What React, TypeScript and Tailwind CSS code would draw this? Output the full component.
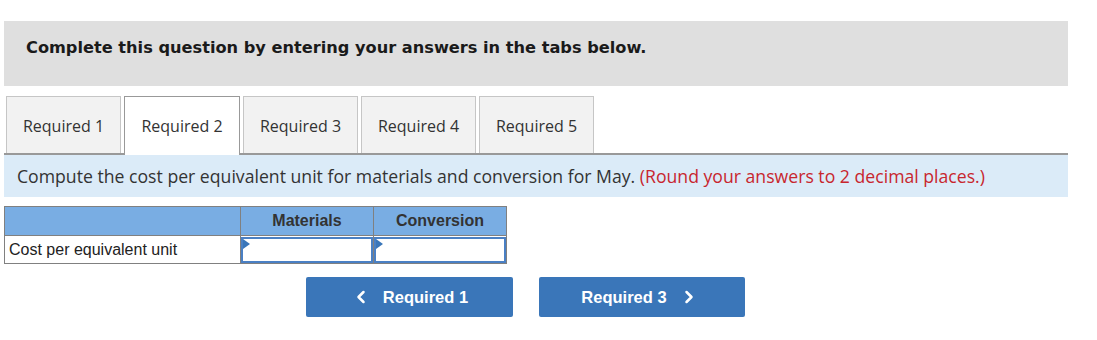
import { ChevronLeft, ChevronRight } from 'lucide-react'

const tabs = ['Required 1', 'Required 2', 'Required 3', 'Required 4', 'Required 5']

function AnswerCell() {
  return (
    <td className="border border-[#808080] p-0">
      <div className="relative h-[26px] border-2 border-[#4a80c4] bg-white">
        <span className="absolute left-0 top-0 h-0 w-0 border-y-[5px] border-l-[7px] border-y-transparent border-l-[#3a76b9]" />
      </div>
    </td>
  )
}

export default function App() {
  return (
    <div className="h-[340px] w-[1097px] bg-white pl-1 pt-[21px]">
      <div className="w-[1064px]">
        <div className="h-[65px] bg-[#dfdfdf] pl-[22px] pt-[15px] font-['DejaVu_Sans',sans-serif] text-[16.2px] leading-[24px] font-bold text-[#1a1a1a]">
          Complete this question by entering your answers in the tabs below.
        </div>

        <div className="mt-[10px] flex gap-[3px] border-b-2 border-[#999] pl-[2px] font-['Open_Sans',sans-serif] text-[16px] text-[#333]">
          {tabs.map((tab, i) => (
            <div
              key={tab}
              className={
                i === 1
                  ? 'relative -mb-[2px] h-[59px] w-[116px] border border-b-0 border-[#999] bg-white pt-[17px] text-center'
                  : 'h-[57px] w-[115px] border border-b-0 border-[#c6c6c6] bg-[#f2f2f2] pt-[17px] text-center'
              }
            >
              {tab}
            </div>
          ))}
        </div>

        <div className="flex h-[42px] items-center bg-[#dbebf8] pl-[13px] font-['Open_Sans',sans-serif] text-[17.65px] text-[#333]">
          <span>
            Compute the cost per equivalent unit for materials and conversion for May.{' '}
            <span className="text-[#c8262e]">(Round your answers to 2 decimal places.)</span>
          </span>
        </div>

        <table className="mt-[9px] w-[503px] border-collapse font-['Liberation_Sans',sans-serif] text-[16px] text-[#222]">
          <thead>
            <tr className="h-[29px] bg-[#79ade3]">
              <th className="w-[236px] border border-[#808080]" />
              <th className="w-[133px] border border-[#808080] font-bold text-[#333]">Materials</th>
              <th className="border border-[#808080] font-bold text-[#333]">Conversion</th>
            </tr>
          </thead>
          <tbody>
            <tr className="h-[28px]">
              <td className="border border-[#808080] pl-1 text-left">Cost per equivalent unit</td>
              <AnswerCell />
              <AnswerCell />
            </tr>
          </tbody>
        </table>

        <div className="mt-[13px] flex gap-[26px] pl-[302px] font-['Liberation_Sans',sans-serif] text-[16.5px] font-bold text-white">
          <button
            type="button"
            className="flex h-[40px] w-[207px] items-center justify-center gap-[12px] rounded-[2px] bg-[#3a76b9]"
          >
            <ChevronLeft size={20} strokeWidth={3} />
            <span>Required 1</span>
          </button>
          <button
            type="button"
            className="flex h-[40px] w-[206px] items-center justify-center gap-[12px] rounded-[2px] bg-[#3a76b9] pr-1"
          >
            <span>Required 3</span>
            <ChevronRight size={20} strokeWidth={3} />
          </button>
        </div>
      </div>
    </div>
  )
}
